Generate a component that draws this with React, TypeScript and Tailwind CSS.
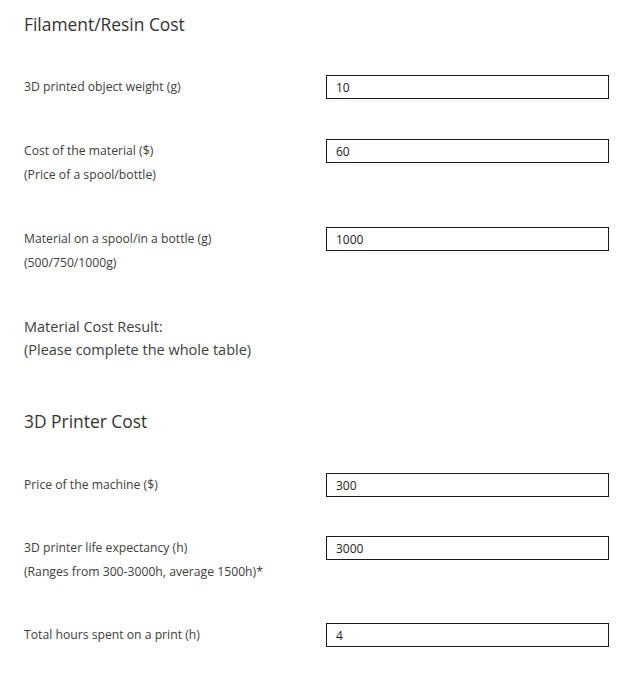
import { useState } from "react";

type Field = {
  label: string;
  hint?: string;
  value: string;
};

const materialFields: Field[] = [
  { label: "3D printed object weight (g)", value: "10" },
  { label: "Cost of the material ($)", hint: "(Price of a spool/bottle)", value: "60" },
  { label: "Material on a spool/in a bottle (g)", hint: "(500/750/1000g)", value: "1000" },
];

const printerFields: Field[] = [
  { label: "Price of the machine ($)", value: "300" },
  { label: "3D printer life expectancy (h)", hint: "(Ranges from 300-3000h, average 1500h)*", value: "3000" },
  { label: "Total hours spent on a print (h)", value: "4" },
];

function FieldRow({ field }: { field: Field }) {
  const [value, setValue] = useState(field.value);
  return (
    <div className="flex">
      <div className="w-[302px] text-[12.2px] leading-[24px] text-[#404040]">
        <div>{field.label}</div>
        {field.hint && <div>{field.hint}</div>}
      </div>
      <input
        type="text"
        value={value}
        onChange={(e) => setValue(e.target.value)}
        className="w-[283px] h-[24px] border border-[#1a1a1a] bg-white px-[9px] text-[12px] text-[#222] outline-none"
      />
    </div>
  );
}

export default function App() {
  return (
    <div
      className="min-h-screen bg-white pl-6 pt-[10px]"
      style={{ fontFamily: '"Open Sans", "Noto Sans", sans-serif' }}
    >
      <h2 className="text-[17.4px] leading-[28px] text-[#333]">Filament/Resin Cost</h2>

      <div className="mt-[37px] flex flex-col gap-[40px]">
        {materialFields.map((f) => (
          <FieldRow key={f.label} field={f} />
        ))}
      </div>

      <div className="mt-[40px] text-[14.5px] leading-[23px] text-[#404040]">
        <div>Material Cost Result:</div>
        <div>(Please complete the whole table)</div>
      </div>

      <h2 className="mt-[46px] text-[17.4px] leading-[28px] text-[#333]">3D Printer Cost</h2>

      <div className="mt-[38px] flex flex-col gap-[39px]">
        {printerFields.map((f) => (
          <FieldRow key={f.label} field={f} />
        ))}
      </div>
    </div>
  );
}
